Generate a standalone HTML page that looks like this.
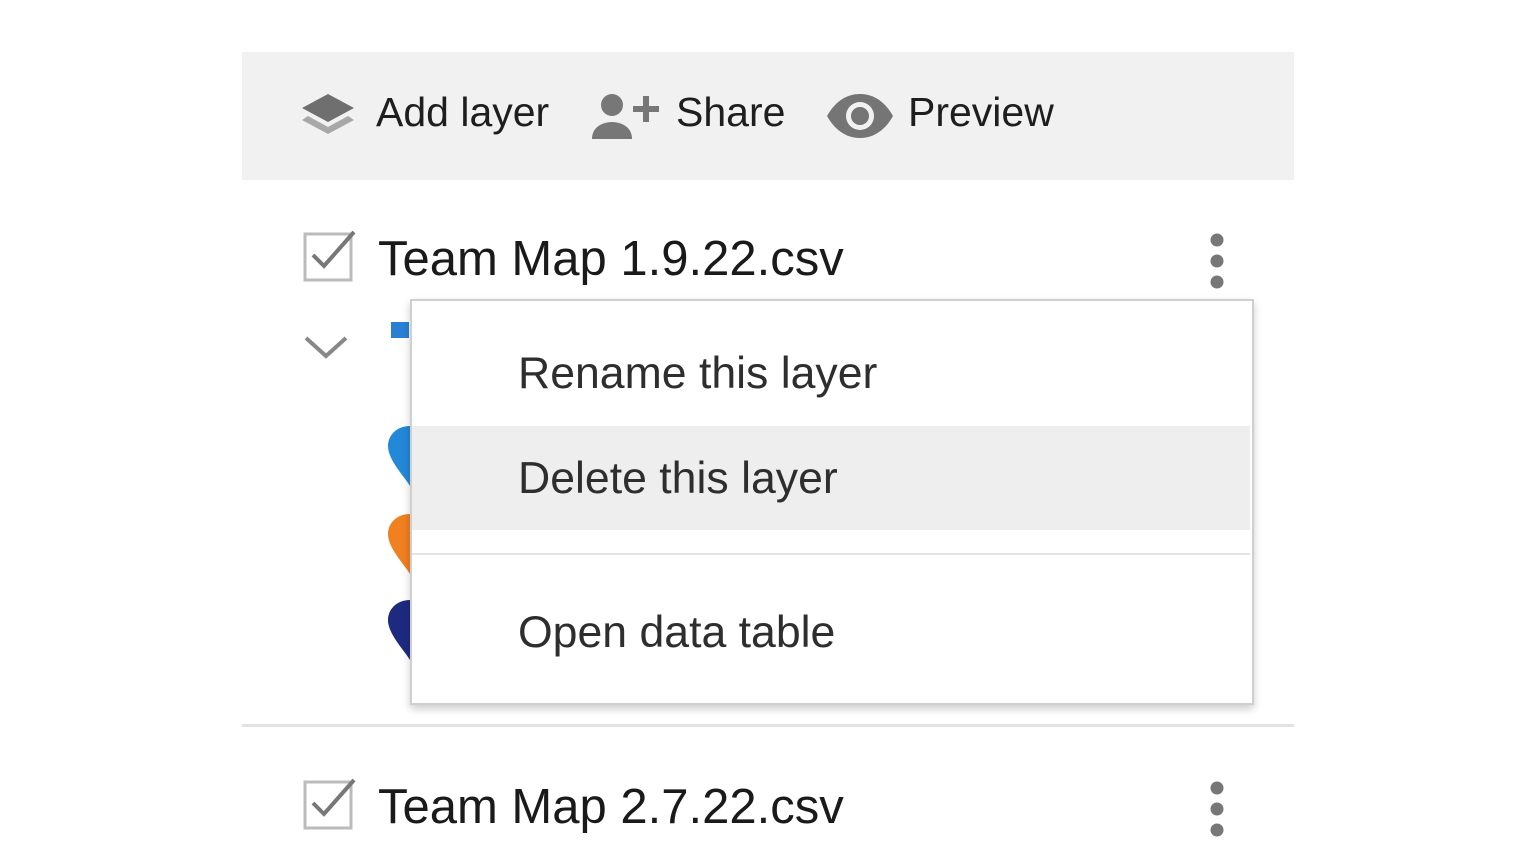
<!DOCTYPE html>
<html><head><style>
body{margin:0;width:1536px;height:864px;background:#fff;position:relative;overflow:hidden;font-family:"Liberation Sans",sans-serif;}
.a{position:absolute;white-space:nowrap;}
.tb{left:242px;top:52px;width:1052px;height:128px;background:#f1f1f1;}
.tt{font-size:41px;color:#1e1e1e;line-height:1;}
.title{font-size:49px;color:#1a1a1a;line-height:1;}
.mi{font-size:44.6px;color:#2e2e2e;line-height:1;}
</style></head><body>
<div class="a tb"></div>
<svg class="a" style="left:300px;top:92px" width="56" height="48" viewBox="0 0 56 48">
<path d="M28 2 L54 16 L28 30 L2 16 Z" fill="#6f6f6f"/>
<path d="M8 24 L28 35 L48 24 L54 28 L28 42 L2 28 Z" fill="#a8a8a8"/>
</svg>
<div class="a tt" style="left:376px;top:92px">Add layer</div>
<svg class="a" style="left:590px;top:92px" width="72" height="50" viewBox="0 0 72 50">
<circle cx="22" cy="13" r="11" fill="#777"/>
<path d="M2 47 C2 34 14 30 22 30 C30 30 42 34 42 47 Z" fill="#777"/>
<rect x="43" y="14" width="26" height="6" fill="#777"/><rect x="53" y="4" width="6" height="26" fill="#777"/>
</svg>
<div class="a tt" style="left:676px;top:92px">Share</div>
<svg class="a" style="left:826px;top:93px" width="68" height="46" viewBox="0 0 68 46">
<path d="M1 23 C10 7 22 1 34 1 C46 1 58 7 67 23 C58 39 46 45 34 45 C22 45 10 39 1 23 Z" fill="#757575"/>
<circle cx="34" cy="23" r="14" fill="#f1f1f1"/><circle cx="34" cy="23" r="9" fill="#757575"/>
</svg>
<div class="a tt" style="left:908px;top:92px">Preview</div>

<svg class="a" style="left:302px;top:228px" width="56" height="56" viewBox="0 0 56 56">
<rect x="3" y="6" width="46" height="46" fill="none" stroke="#bbb" stroke-width="3"/>
<path d="M11 27 L22 38 L52 4" fill="none" stroke="#777" stroke-width="4"/>
</svg>
<div class="a title" style="left:378px;top:235px">Team Map 1.9.22.csv</div>
<svg class="a" style="left:1205px;top:229px" width="24" height="66"><circle cx="12" cy="11" r="6.5" fill="#777"/><circle cx="12" cy="32" r="6.5" fill="#777"/><circle cx="12" cy="53" r="6.5" fill="#777"/></svg>

<svg class="a" style="left:302px;top:334px" width="48" height="28"><path d="M4 4 L24 22 L44 4" fill="none" stroke="#888" stroke-width="4"/></svg>
<div class="a" style="left:391px;top:322px;width:18px;height:16px;background:#2a7fd4"></div>
<svg class="a" style="left:386px;top:424px" width="30" height="250" viewBox="0 0 30 250">
<path d="M24 2 C10 2 2 12 2 22 C2 36 18 52 24 62 Z" fill="#2388d8"/>
<path d="M24 90 C10 90 2 100 2 110 C2 124 18 140 24 150 Z" fill="#f08020"/>
<path d="M24 176 C10 176 2 186 2 196 C2 210 18 226 24 236 Z" fill="#1e2a80"/>
</svg>

<div class="a" style="left:410px;top:299px;width:840px;height:402px;background:#fff;border:2px solid #cfcfcf;box-shadow:0 4px 8px rgba(0,0,0,0.2)"></div>
<div class="a" style="left:412px;top:426px;width:838px;height:104px;background:#eee"></div>
<div class="a" style="left:412px;top:553px;width:838px;height:2px;background:#e4e4e4"></div>
<div class="a mi" style="left:518px;top:352px">Rename this layer</div>
<div class="a mi" style="left:518px;top:457px">Delete this layer</div>
<div class="a mi" style="left:518px;top:611px">Open data table</div>

<div class="a" style="left:242px;top:724px;width:1052px;height:3px;background:#e2e2e2"></div>
<svg class="a" style="left:302px;top:776px" width="56" height="56" viewBox="0 0 56 56">
<rect x="3" y="6" width="46" height="46" fill="none" stroke="#bbb" stroke-width="3"/>
<path d="M11 27 L22 38 L52 4" fill="none" stroke="#777" stroke-width="4"/>
</svg>
<div class="a title" style="left:378px;top:783px">Team Map 2.7.22.csv</div>
<svg class="a" style="left:1205px;top:777px" width="24" height="66"><circle cx="12" cy="11" r="6.5" fill="#777"/><circle cx="12" cy="32" r="6.5" fill="#777"/><circle cx="12" cy="53" r="6.5" fill="#777"/></svg>
</body></html>
